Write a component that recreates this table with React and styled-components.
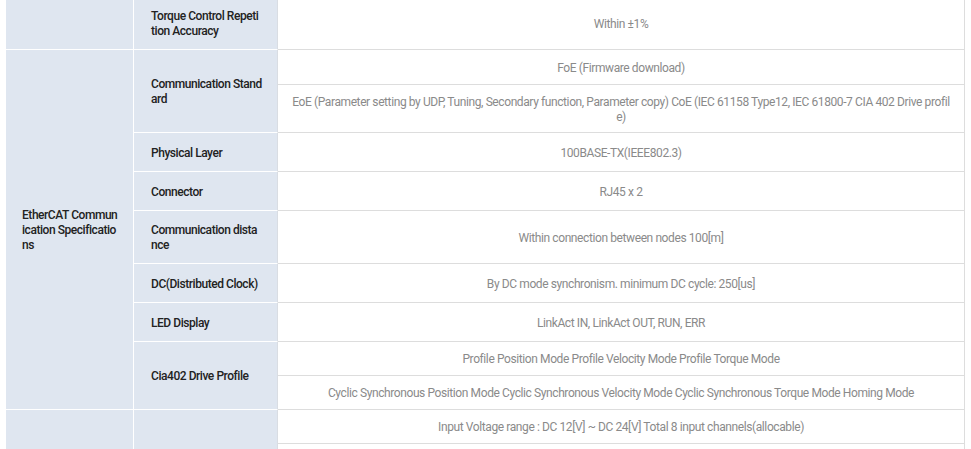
import React from 'react';
import styled, { createGlobalStyle } from 'styled-components';

const GlobalStyle = createGlobalStyle`
  html, body {
    margin: 0;
    padding: 0;
    background: #ffffff;
  }
  body {
    font-family: Roboto, "Noto Sans", "Liberation Sans", sans-serif;
  }
`;

// spec rows, as they appear in the visible part of the table
// (\n marks where the original site wraps the label)
const rows = [
  {
    h: 53,
    group: { text: '', span: 1 },
    label: { text: 'Torque Control Repeti\ntion Accuracy', span: 1 },
    value: 'Within ±1%',
  },
  {
    h: 35,
    group: { text: 'EtherCAT Commun\nication Specificatio\nns', span: 9 },
    label: { text: 'Communication Stand\nard', span: 2 },
    value: 'FoE (Firmware download)',
  },
  {
    h: 48,
    value:
      'EoE (Parameter setting by UDP, Tuning, Secondary function, Parameter copy) CoE (IEC 61158 Type12, IEC 61800-7 CIA 402 Drive profile)',
  },
  { h: 39, label: { text: 'Physical Layer', span: 1 }, value: '100BASE-TX(IEEE802.3)' },
  { h: 39, label: { text: 'Connector', span: 1 }, value: 'RJ45 x 2' },
  {
    h: 53,
    label: { text: 'Communication dista\nnce', span: 1 },
    value: 'Within connection between nodes 100[m]',
  },
  {
    h: 39,
    label: { text: 'DC(Distributed Clock)', span: 1 },
    value: 'By DC mode synchronism. minimum DC cycle: 250[us]',
  },
  { h: 39, label: { text: 'LED Display', span: 1 }, value: 'LinkAct IN, LinkAct OUT, RUN, ERR' },
  {
    h: 34,
    label: { text: 'Cia402 Drive Profile', span: 2 },
    value: 'Profile Position Mode Profile Velocity Mode Profile Torque Mode',
  },
  {
    h: 34,
    value:
      'Cyclic Synchronous Position Mode Cyclic Synchronous Velocity Mode Cyclic Synchronous Torque Mode Homing Mode',
  },
  {
    h: 34,
    group: { text: '', span: 2 },
    label: { text: '', span: 2 },
    value: 'Input Voltage range : DC 12[V] ~ DC 24[V] Total 8 input channels(allocable)',
  },
  { h: 34, value: '' },
];

const App = () => {
  return (
    <>
      <GlobalStyle />
      <Wrapper>
        <SpecTable>
          <colgroup>
            <col style={{ width: 128 }} />
            <col style={{ width: 144 }} />
            <col style={{ width: 687 }} />
          </colgroup>
          <tbody>
            {rows.map((row, i) => (
              <Row key={i} $h={row.h}>
                {row.group && <GroupCell rowSpan={row.group.span}>{row.group.text}</GroupCell>}
                {row.label && <LabelCell rowSpan={row.label.span}>{row.label.text}</LabelCell>}
                <ValueCell>{row.value}</ValueCell>
              </Row>
            ))}
          </tbody>
        </SpecTable>
      </Wrapper>
    </>
  );
};

export default App;

const Wrapper = styled.div`
  padding-left: 6px;
  margin-top: -3px;
`;

const SpecTable = styled.table`
  width: 959px;
  table-layout: fixed;
  border-collapse: separate;
  border-spacing: 0;
  font-size: 12px;
  line-height: 15px;
  letter-spacing: -0.4px;
`;

const Row = styled.tr`
  height: ${(p) => p.$h}px;
`;

const GroupCell = styled.th`
  background: #dfe6f0;
  border-right: 1px solid #ffffff;
  border-bottom: 1px solid #ffffff;
  padding: 2px 8px 0 16px;
  text-align: left;
  vertical-align: middle;
  font-weight: 500;
  letter-spacing: -0.45px;
  color: #222222;
  white-space: pre;
`;

const LabelCell = styled.th`
  background: #dfe6f0;
  border-right: 1px solid #d9dde3;
  border-bottom: 1px solid #ffffff;
  padding: 2px 8px 0 17px;
  text-align: left;
  vertical-align: middle;
  font-weight: 500;
  letter-spacing: -0.45px;
  color: #222222;
  white-space: pre;
`;

const ValueCell = styled.td`
  border-right: 1px solid #dddddd;
  border-bottom: 1px solid #dddddd;
  padding: 2px 10px 0;
  text-align: center;
  vertical-align: middle;
  color: #8a8a8a;
  word-break: break-all;
`;
